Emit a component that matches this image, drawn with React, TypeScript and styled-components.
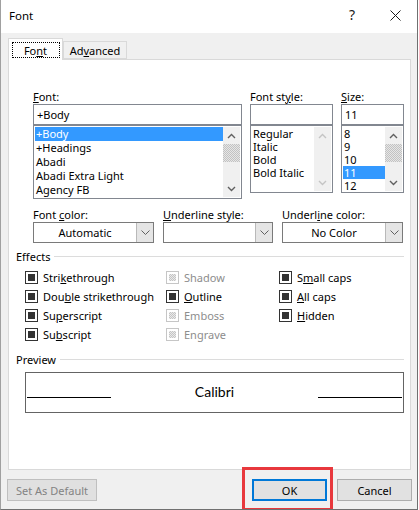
import React from "react";
import styled, { createGlobalStyle } from "styled-components";

const UI = `"Noto Sans", "DejaVu Sans", sans-serif`;

const Global = createGlobalStyle`
  html, body { margin: 0; padding: 0; background: #ffffff; }
  body { width: 419px; height: 510px; overflow: hidden; }
`;

const Window = styled.div`
  position: relative;
  width: 418px;
  height: 510px;
  box-sizing: border-box;
  background: #f0f0f0;
  border-left: 1px solid #a0a0a0;
  border-right: 1px solid #707070;
  border-bottom: 1px solid #707070;
  display: flex;
  flex-direction: column;
  font-family: ${UI};
  font-size: 11px;
  color: #000;
  overflow: hidden;
`;

const TitleBar = styled.div`
  height: 33px;
  flex: none;
  background: #ffffff;
  display: flex;
  align-items: center;
  padding: 0 16px 0 8px;
`;

const TitleText = styled.div`
  flex: 1;
  font-size: 11.5px;
  line-height: 16px;
  margin-top: -2px;
`;

const TitleButtons = styled.div`
  display: flex;
  align-items: center;
  gap: 35px;
  margin-top: -3px;
`;

const HelpGlyph = styled.span`
  font-size: 14px;
  line-height: 16px;
  color: #1a1a1a;
`;

const U = styled.u`
  text-decoration: underline;
  text-underline-offset: 1px;
`;

const TabStrip = styled.div`
  display: flex;
  align-items: flex-start;
  height: 22px;
  margin: 5px 0 -1px 7px;
  position: relative;
  z-index: 1;
`;

const Tab = styled.div<{ $active?: boolean }>`
  box-sizing: border-box;
  border: 1px solid #d9d9d9;
  border-bottom: ${(p) => (p.$active ? "none" : "1px solid #d9d9d9")};
  background: ${(p) => (p.$active ? "#ffffff" : "#f0f0f0")};
  width: ${(p) => (p.$active ? 55 : 64)}px;
  height: ${(p) => (p.$active ? 22 : 18)}px;
  margin-top: ${(p) => (p.$active ? 0 : 3)}px;
  display: flex;
  justify-content: center;
  align-items: ${(p) => (p.$active ? "flex-start" : "center")};
  padding-top: ${(p) => (p.$active ? 3 : 0)}px;
  line-height: 15px;
`;

const FocusRing = styled.div`
  box-sizing: border-box;
  width: 48px;
  height: 16px;
  border: 1px dotted #000;
  display: flex;
  align-items: center;
  justify-content: center;
`;

const Panel = styled.div`
  box-sizing: border-box;
  width: 403px;
  height: 411px;
  flex: none;
  margin-left: 7px;
  background: #ffffff;
  border: 1px solid #d9d9d9;
  padding-top: 29px;
  display: flex;
  flex-direction: column;
`;

const FontGrid = styled.div`
  display: grid;
  grid-template-columns: 209px 83px 63px;
  column-gap: 8px;
  margin-left: 24px;
  align-items: start;
`;

const Column = styled.div`
  display: flex;
  flex-direction: column;
`;

const Label = styled.div`
  height: 15px;
  line-height: 15px;
  white-space: nowrap;
`;

const Field = styled.div`
  box-sizing: border-box;
  height: 21px;
  border: 1px solid #828790;
  padding-left: 3px;
  line-height: 19px;
`;

const ListBox = styled.div<{ $h: number }>`
  box-sizing: border-box;
  height: ${(p) => p.$h}px;
  border: 1px solid #828790;
  padding: 1px;
  display: flex;
  background: #fff;
`;

const Items = styled.div`
  flex: 1;
  display: flex;
  flex-direction: column;
`;

const Item = styled.div<{ $sel?: boolean; $rh: number }>`
  height: ${(p) => p.$rh}px;
  line-height: ${(p) => p.$rh}px;
  padding-left: 1px;
  white-space: nowrap;
  flex: none;
  background: ${(p) => (p.$sel ? "#3399ff" : "transparent")};
  color: ${(p) => (p.$sel ? "#ffffff" : "#000000")};
`;

const ScrollBar = styled.div`
  width: 17px;
  flex: none;
  background: #f0f0f0;
  display: flex;
  flex-direction: column;
`;

const ScrollArrow = styled.div`
  height: 17px;
  flex: none;
  display: flex;
  align-items: center;
  justify-content: center;
`;

const Track = styled.div`
  flex: 1;
`;

const Thumb = styled.div`
  height: 18px;
  background: repeating-conic-gradient(#c2c2c2 0 25%, #e6e6e6 0 50%) 0 0 / 2px 2px;
`;

const ComboGrid = styled.div`
  display: grid;
  grid-template-columns: 121px 110px 121px;
  column-gap: 9px;
  margin: 8px 0 0 24px;
`;

const Combo = styled.div`
  box-sizing: border-box;
  height: 21px;
  border: 1px solid #7a7a7a;
  display: flex;
  background: #fff;
`;

const ComboText = styled.div`
  flex: 1;
  text-align: center;
  line-height: 19px;
`;

const ComboArrow = styled.div`
  width: 17px;
  box-sizing: border-box;
  background: #e5e5e5;
  border-left: 1px solid #b9b9b9;
  display: flex;
  align-items: center;
  justify-content: center;
`;

const Section = styled.div`
  margin: 6px 6px 0 7px;
  display: flex;
  flex-direction: column;
`;

const GroupHeader = styled.div<{ $top?: number }>`
  display: flex;
  align-items: center;
  gap: 4px;
  height: 15px;
  line-height: 15px;
  margin-top: ${(p) => p.$top ?? 0}px;
`;

const Rule = styled.div`
  flex: 1;
  height: 1px;
  background: #dcdcdc;
`;

const CheckGrid = styled.div`
  display: grid;
  grid-template-columns: 141px 113px 1fr;
  grid-template-rows: repeat(4, 19px);
  grid-auto-flow: column;
  margin: 4px 0 0 9px;
`;

const CheckRow = styled.div<{ $disabled?: boolean }>`
  display: flex;
  align-items: center;
  gap: 5px;
  white-space: nowrap;
  color: ${(p) => (p.$disabled ? "#8d8d8d" : "#000")};
`;

const Box = styled.div<{ $disabled?: boolean }>`
  box-sizing: border-box;
  width: 13px;
  height: 13px;
  border: 1px solid ${(p) => (p.$disabled ? "#c6c6c6" : "#333333")};
  background: #fff;
  display: flex;
  align-items: center;
  justify-content: center;
`;

const BoxFill = styled.div<{ $disabled?: boolean }>`
  width: 7px;
  height: 7px;
  background: ${(p) =>
    p.$disabled
      ? "repeating-conic-gradient(#c4c4c4 0 25%, #e9e9e9 0 50%) 0 0 / 2px 2px"
      : "#333333"};
`;

const PreviewBox = styled.div`
  box-sizing: border-box;
  width: 379px;
  height: 41px;
  margin: 5px 0 0 9px;
  border: 1px solid #646464;
  padding: 0 1px;
  display: flex;
  justify-content: space-between;
  align-items: flex-start;
`;

const PreviewLine = styled.div`
  width: 84px;
  height: 1px;
  background: #000;
  margin-top: 24px;
`;

const PreviewText = styled.div`
  font-family: "Lato", "Liberation Sans", sans-serif;
  font-size: 14px;
  line-height: 18px;
  margin-top: 10px;
`;

const Footer = styled.div`
  display: flex;
  align-items: center;
  margin-top: 9px;
  padding: 0 5px 0 6px;
  gap: 10px;
`;

const Button = styled.div<{ $w: number; $variant?: "default" | "disabled" | "normal" }>`
  box-sizing: border-box;
  width: ${(p) => p.$w}px;
  height: 22px;
  display: flex;
  align-items: center;
  justify-content: center;
  background: ${(p) => (p.$variant === "disabled" ? "#e0e0e0" : "#e1e1e1")};
  border: ${(p) =>
    p.$variant === "default"
      ? "2px solid #0078d7"
      : p.$variant === "disabled"
      ? "1px solid #bfbfbf"
      : "1px solid #adadad"};
  color: ${(p) => (p.$variant === "disabled" ? "#838383" : "#000")};
`;

const Spacer = styled.div`
  flex: 1;
`;

const Highlight = styled.div`
  position: absolute;
  left: 241px;
  top: 467px;
  width: 91px;
  height: 44px;
  box-sizing: border-box;
  border: 3px solid #e8383d;
  pointer-events: none;
`;

const Chevron = ({ dir, color }: { dir: "up" | "down"; color: string }) => (
  <svg width="9" height="6" viewBox="0 0 9 6">
    <polyline
      points={dir === "up" ? "1,5 4.5,1.5 8,5" : "1,1 4.5,4.5 8,1"}
      fill="none"
      stroke={color}
      strokeWidth="1.4"
    />
  </svg>
);

const ComboChevron = () => (
  <svg width="9" height="5" viewBox="0 0 9 5">
    <polyline points="0.5,0.5 4.5,4.5 8.5,0.5" fill="none" stroke="#606060" strokeWidth="1" />
  </svg>
);

const CloseIcon = () => (
  <svg width="11" height="11" viewBox="0 0 11 11">
    <path d="M0.5 0.5 L10.5 10.5 M10.5 0.5 L0.5 10.5" stroke="#1a1a1a" strokeWidth="1" />
  </svg>
);

type ListProps = {
  h: number;
  rh: number;
  items: React.ReactNode[];
  sel?: number;
  disabled?: boolean;
};

const List = ({ h, rh, items, sel, disabled }: ListProps) => {
  const c = disabled ? "#c4c4c4" : "#606060";
  return (
    <ListBox $h={h}>
      <Items>
        {items.map((it, i) => (
          <Item key={i} $rh={rh} $sel={i === sel}>
            {it}
          </Item>
        ))}
      </Items>
      <ScrollBar>
        <ScrollArrow>
          <Chevron dir="up" color={c} />
        </ScrollArrow>
        <Track>{!disabled && <Thumb />}</Track>
        <ScrollArrow>
          <Chevron dir="down" color={c} />
        </ScrollArrow>
      </ScrollBar>
    </ListBox>
  );
};

const Check = ({ children, disabled }: { children: React.ReactNode; disabled?: boolean }) => (
  <CheckRow $disabled={disabled}>
    <Box $disabled={disabled}>
      <BoxFill $disabled={disabled} />
    </Box>
    <span>{children}</span>
  </CheckRow>
);

export default function App() {
  return (
    <>
      <Global />
      <Window>
        <TitleBar>
          <TitleText>Font</TitleText>
          <TitleButtons>
            <HelpGlyph>?</HelpGlyph>
            <CloseIcon />
          </TitleButtons>
        </TitleBar>
        <TabStrip>
          <Tab $active>
            <FocusRing>
              Fo<U>n</U>t
            </FocusRing>
          </Tab>
          <Tab>
            Ad<U>v</U>anced
          </Tab>
        </TabStrip>
        <Panel>
          <FontGrid>
            <Column>
              <Label>
                <U>F</U>ont:
              </Label>
              <Field>+Body</Field>
              <List
                h={74}
                rh={14}
                sel={0}
                items={["+Body", "+Headings", "Abadi", "Abadi Extra Light", "Agency FB"]}
              />
            </Column>
            <Column>
              <Label>
                Font st<U>y</U>le:
              </Label>
              <Field />
              <List h={68} rh={13} disabled items={["Regular", "Italic", "Bold", "Bold Italic"]} />
            </Column>
            <Column>
              <Label>
                <U>S</U>ize:
              </Label>
              <Field>11</Field>
              <List h={68} rh={13} sel={3} items={["8", "9", "10", "11", "12"]} />
            </Column>
          </FontGrid>
          <ComboGrid>
            <Column>
              <Label>
                Font <U>c</U>olor:
              </Label>
              <Combo>
                <ComboText>Automatic</ComboText>
                <ComboArrow>
                  <ComboChevron />
                </ComboArrow>
              </Combo>
            </Column>
            <Column>
              <Label>
                <U>U</U>nderline style:
              </Label>
              <Combo>
                <ComboText />
                <ComboArrow>
                  <ComboChevron />
                </ComboArrow>
              </Combo>
            </Column>
            <Column>
              <Label>
                Underl<U>i</U>ne color:
              </Label>
              <Combo>
                <ComboText>No Color</ComboText>
                <ComboArrow>
                  <ComboChevron />
                </ComboArrow>
              </Combo>
            </Column>
          </ComboGrid>
          <Section>
            <GroupHeader>
              <span>Effects</span>
              <Rule />
            </GroupHeader>
            <CheckGrid>
              <Check>
                Stri<U>k</U>ethrough
              </Check>
              <Check>
                Dou<U>b</U>le strikethrough
              </Check>
              <Check>
                Su<U>p</U>erscript
              </Check>
              <Check>
                Su<U>b</U>script
              </Check>
              <Check disabled>Shadow</Check>
              <Check>
                <U>O</U>utline
              </Check>
              <Check disabled>Emboss</Check>
              <Check disabled>Engrave</Check>
              <Check>
                S<U>m</U>all caps
              </Check>
              <Check>
                <U>A</U>ll caps
              </Check>
              <Check>
                <U>H</U>idden
              </Check>
            </CheckGrid>
            <GroupHeader $top={8}>
              <span>Preview</span>
              <Rule />
            </GroupHeader>
            <PreviewBox>
              <PreviewLine />
              <PreviewText>Calibri</PreviewText>
              <PreviewLine />
            </PreviewBox>
          </Section>
        </Panel>
        <Footer>
          <Button $w={90} $variant="disabled">
            Set As Default
          </Button>
          <Spacer />
          <Button $w={75} $variant="default">
            OK
          </Button>
          <Button $w={75} $variant="normal">
            Cancel
          </Button>
        </Footer>
        <Highlight />
      </Window>
    </>
  );
}
